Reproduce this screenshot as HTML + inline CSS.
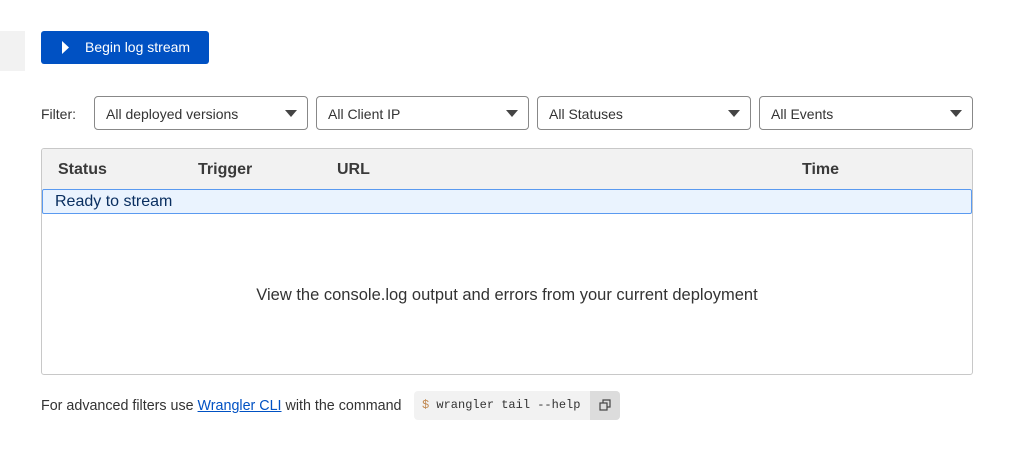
<!DOCTYPE html>
<html><head><style>
*{box-sizing:border-box;margin:0;padding:0}
body{width:1034px;height:463px;background:#fff;font-family:"Liberation Sans",sans-serif;color:#333;position:relative;overflow:hidden}
.side{position:absolute;left:0;top:31px;width:25px;height:40px;background:#f2f2f2}
.btn{position:absolute;left:41px;top:31px;width:168px;height:33px;background:#0051c3;border-radius:3px;color:#fff;font-size:14px;line-height:33px;padding-left:44px}
.btn svg{position:absolute;left:20px;top:10px}
.flabel{position:absolute;left:41px;top:106px;font-size:14px}
.sel{position:absolute;top:96px;height:34px;border:1px solid #888;border-radius:4px;font-size:14px;line-height:34px;padding-left:11px;color:#333}
.sel:after{content:"";position:absolute;right:10px;top:13px;border-left:6px solid transparent;border-right:6px solid transparent;border-top:7px solid #444}
.table{position:absolute;left:41px;top:148px;width:932px;height:227px;border:1px solid #c8c8c8;border-radius:3px;overflow:hidden}
.th{height:40px;background:#f2f2f2;font-weight:bold;font-size:16px;position:relative;color:#3a3a3a}
.th span{position:absolute;top:12px}
.ready{position:absolute;left:0;top:40px;width:930px;height:25px;background:#eaf3fe;border:1px solid #5a9af0;border-radius:2px;color:#0a2f60;font-size:16px;line-height:23px;padding-left:12px}
.msg{position:absolute;top:137px;width:100%;text-align:center;font-size:16.5px}
.foot{position:absolute;left:41px;top:398px;font-size:14.3px}
.foot a{color:#0051c3;text-decoration:underline}
.code{position:absolute;left:414px;top:391px;width:206px;height:29px;background:#f2f2f2;border-radius:4px;font-family:"Liberation Mono",monospace;font-size:12px;line-height:29px;padding-left:8px;color:#333}
.code b{color:#c0874f;font-weight:normal}
.cp{position:absolute;right:0;top:0;width:30px;height:29px;background:#dcdcdc;border-radius:0 4px 4px 0}
</style></head><body>
<div class="side"></div>
<div class="btn"><svg width="9" height="13"><path d="M1 0L8 6.5 1 13Z" fill="#fff"/></svg>Begin log stream</div>
<div class="flabel">Filter:</div>
<div class="sel" style="left:94px;width:214px">All deployed versions</div>
<div class="sel" style="left:316px;width:213px">All Client IP</div>
<div class="sel" style="left:537px;width:214px">All Statuses</div>
<div class="sel" style="left:759px;width:214px">All Events</div>
<div class="table">
<div class="th"><span style="left:16px">Status</span><span style="left:156px">Trigger</span><span style="left:295px">URL</span><span style="left:760px">Time</span></div>
<div class="ready">Ready to stream</div>
<div class="msg">View the console.log output and errors from your current deployment</div>
</div>
<div class="foot">For advanced filters use <a>Wrangler CLI</a> with the command</div>
<div class="code"><b>$</b> wrangler tail --help<div class="cp"><svg width="30" height="29"><rect x="10" y="12" width="7" height="7" fill="none" stroke="#444" stroke-width="1.2"/><path d="M13 12V9h7v7h-3" fill="none" stroke="#444" stroke-width="1.2"/></svg></div></div>
</body></html>
